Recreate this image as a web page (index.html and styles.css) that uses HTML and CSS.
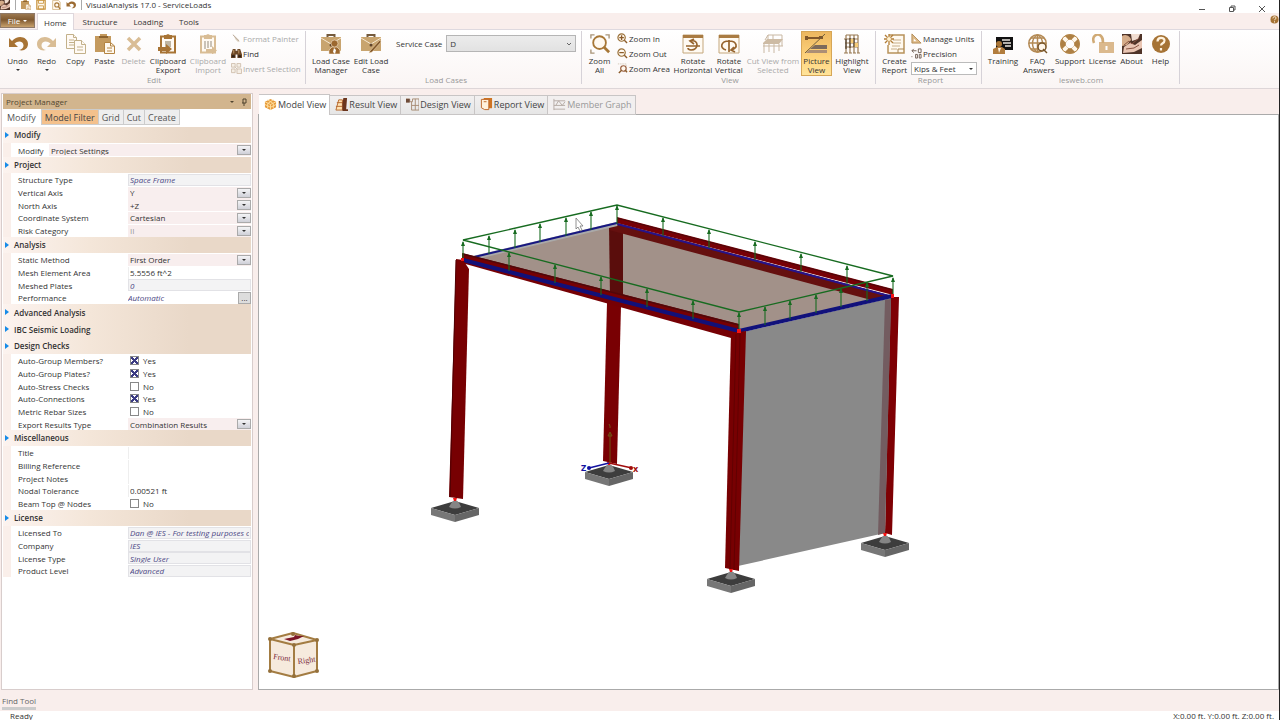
FILE: index.html
```html
<!DOCTYPE html>
<html lang="en">
<head>
<meta charset="utf-8">
<title>VisualAnalysis 17.0 - ServiceLoads</title>
<link rel="stylesheet" href="styles.css">
</head>
<body>
<svg class="defs" aria-hidden="true">
  <symbol id="undo" viewBox="0 0 20 20"><path d="M1 4v9h9L6.500 9.500C10 6 15.500 7 15.500 11.500c0 2.500-2 4-4.500 4.500 5 1.500 9-1.500 9-6C20 3 10 0 4 7z" fill="currentColor"/></symbol>
  <symbol id="redo" viewBox="0 0 20 20"><path d="M19 4v9h-9l3.500-3.500C10 6 4.500 7 4.500 11.500c0 2.500 2 4 4.500 4.500-5 1.500-9-1.500-9-6C0 3 10 0 16 7z" fill="currentColor"/></symbol>
  <symbol id="copy" viewBox="0 0 20 20"><g fill="#fffaf5" stroke="currentColor"><path d="M.5.5h7l3 3v11H.5z"/><path d="M7.500.500v3h3M3 6h5M3 8.500h5M3 11h5"/><path d="M8.500 6.500h7l4 4v9h-11z"/><path d="M15.500 6.500v4h4M11 13h6M11 16h6"/></g></symbol>
  <symbol id="paste" viewBox="0 0 20 20"><path d="M0 2h5V0h7v2h4v16H0z" fill="#c49a5e"/><path d="M4 4h9V2H4z" fill="#8d6430"/><path d="M9.500 8.500h6l4 3.500v7.500h-10z" fill="#fff8ee" stroke="#b48442"/><path d="M15.500 8.500V12h4M12 14h5M12 17h5" fill="none" stroke="#b48442"/></symbol>
  <symbol id="delete" viewBox="0 0 20 20"><path d="M4 4l12 12M16 4L4 16" stroke="currentColor" stroke-width="3.500"/></symbol>
  <symbol id="clipout" viewBox="0 0 20 20"><path d="M3 2.500h14v16H3z" fill="#fffaf3" stroke="currentColor" stroke-width="2"/><path d="M6 1h2l2-1 2 1h2v4H6z" fill="currentColor"/><path d="M7 7h6v6H7z" fill="#bfb5a2"/><path d="M0 13h8v-3l6 5-6 5v-3H0z" fill="currentColor"/></symbol>
  <symbol id="clipin" viewBox="0 0 20 20"><path d="M3 2.500h14v16H3z" fill="#fffaf3" stroke="currentColor" stroke-width="2"/><path d="M6 1h2l2-1 2 1h2v4H6z" fill="currentColor"/><path d="M7 7v8M10 7v7M13 7v6" stroke="#b9b1a5" stroke-width="1.500"/><path d="M8 15h6v-3l5 4.500-5 4V18H8z" fill="currentColor"/></symbol>
  <symbol id="brush" viewBox="0 0 12 12"><path d="M2 1l7 7-1 2-3-3z" fill="#d8cbb8"/><path d="M2 2l7 7" stroke="#bcaea0"/></symbol>
  <symbol id="find" viewBox="0 0 12 12"><path d="M2 1h3v2h2V1h3l2 6v4H7V7H5v4H0V7z" fill="#6b4726"/><path d="M1 8h3v2H1zM8 8h3v2H8z" fill="#2d2019"/><path d="M3 2v4M8.500 2v4" stroke="#c6a06d"/></symbol>
  <symbol id="invert" viewBox="0 0 12 12"><g fill="#f5eee5" stroke="#d0c0ae"><path d="M.5.500h4v4h-4zM6.500.500h4v4h-4zM.5 6.500h4v4h-4zM6.500 6.500h5v5h-5z"/><path d="M4 4l3 3"/></g></symbol>
  <symbol id="case" viewBox="0 0 20 20"><path d="M6.500 3V1h7v2" fill="none" stroke="#755b3d" stroke-width="2"/><path d="M0 3h20v14H0z" fill="#c8a46f"/><path d="M0 4l10 6 10-6" fill="none" stroke="#f5e7cf"/><circle cx="10" cy="11" r="1.500" fill="#60442a"/></symbol>
  <symbol id="manager" viewBox="0 0 20 20"><use href="#case"/><g fill="#9c682f" stroke="#f6e6d0" stroke-width=".6"><path d="M8 20v-4l3-3h5l3 3v4z"/><circle cx="13.500" cy="9.500" r="3.500"/></g><path d="M13 14l2 2-1 4-2-2z" fill="#fff"/></symbol>
  <symbol id="editcase" viewBox="0 0 20 20"><use href="#case"/><path d="M9 17L19 6l1 2-9 10-3 1z" fill="#805527" stroke="#f4dfbd" stroke-width=".5"/></symbol>
  <symbol id="zoomall" viewBox="0 0 22 22"><path d="M1 5V1h4M17 1h4v4M5 21H1v-4" fill="none" stroke="#a99578" stroke-width="1.500"/><circle cx="10.500" cy="9.500" r="7" fill="#fff9f0" stroke="#a77736" stroke-width="2"/><path d="M15 14l6 6" stroke="#a77736" stroke-width="3"/></symbol>
  <symbol id="zoomin" viewBox="0 0 12 12"><circle cx="5" cy="5" r="4" fill="#fff8ee" stroke="#9a7038" stroke-width="1.300"/><path d="M5 2.500v5M2.500 5h5M8 8l3 3" stroke="#8c5c2a" stroke-width="1.500"/></symbol>
  <symbol id="zoomout" viewBox="0 0 12 12"><circle cx="5" cy="5" r="4" fill="#fff8ee" stroke="#9a7038" stroke-width="1.300"/><path d="M2.500 5h5M8 8l3 3" stroke="#8c5c2a" stroke-width="1.500"/></symbol>
  <symbol id="zoomarea" viewBox="0 0 12 12"><path d="M1 1h9v9" fill="none" stroke="#c9bba7" stroke-dasharray="1 1"/><circle cx="7" cy="6" r="3" fill="#fff8ee" stroke="#9a5f40" stroke-width="1.300"/><path d="M5 8l-3 3M9 8l2 2" stroke="#8c5c2a" stroke-width="1.500"/></symbol>
  <symbol id="preview" viewBox="0 0 12 12"><path d="M2 .500h7l2 2v9H2z" fill="#fff8ee" stroke="#d3b583"/><circle cx="7" cy="6" r="2.500" fill="none" stroke="#a77736" stroke-width="1.300"/><path d="M9 8l2 3" stroke="#a77736" stroke-width="1.500"/></symbol>
  <symbol id="roth" viewBox="0 0 22 20"><path d="M1 1h20v18H1z" fill="#fffaf2" stroke="#c4a77d"/><path d="M1 1h20v3H1z" fill="#a97b42"/><path d="M4 12h14M9 7c8-2 8 9 0 9-2 0-3-1-3-2M12 5L8 7l4 3" fill="none" stroke="#97652f" stroke-width="1.700"/></symbol>
  <symbol id="rotv" viewBox="0 0 22 20"><path d="M1 1h20v18H1z" fill="#fffaf2" stroke="#c4a77d"/><path d="M1 1h20v3H1z" fill="#a97b42"/><path d="M11 6v12M8 16c-7-2-5-9 3-9s10 7 2 9M16 13l-3 3 4 2" fill="none" stroke="#97652f" stroke-width="1.700"/></symbol>
  <symbol id="cutview" viewBox="0 0 22 20"><path d="M1 9l4-4h16l-4 5H1z" fill="#cdbba4"/><path d="M2 9v10M7 10v8M12 10v9M17 10v7M6 5V1h14v11M1 12h20M11 1v5M6 1l-3 5" fill="none" stroke="#c9b8a3"/></symbol>
  <symbol id="picture" viewBox="0 0 22 20"><path d="M1 4h16" stroke="#80572b" stroke-width="2"/><path d="M0 2h3v4H0zM14 2h4v3h-4z" fill="#80572b"/><path d="M0 19L20 0" stroke="#6f5d3c"/><path d="M10 11h12v4H5z" fill="#7c6a5b"/><path d="M4 16h18v3H1z" fill="#ac8e75"/></symbol>
  <symbol id="highlight" viewBox="0 0 20 20"><path d="M4 1v18M8 1v18M12 1v18M16 1v18M4 1h12M2 5h14M3 9h13M3 13h13M2 19h4M7 19h3M11 19h3M15 19h3" fill="none" stroke="#987951" stroke-width="1.200"/><path d="M8 5h4v4H8zM12 9h4v4h-4z" fill="#f5cb78"/><path d="M8 4v10M12 4v9M4 5v10" stroke="#362d24"/></symbol>
  <symbol id="report" viewBox="0 0 22 20"><path d="M5 1h15v18H4v-8" fill="#fff9ef" stroke="#b8925b" stroke-width="1.500"/><path d="M9 6h8M9 9h8M8 12h8M7 15h6" stroke="#c7ae89"/><path d="M5 0v11M0 5h10M1 1l8 8M9 1L1 9" stroke="#b27d37" stroke-width="1.300"/><circle cx="5" cy="5" r="2" fill="#fff2d0"/><path d="M14 19v-4h6" fill="none" stroke="#a98755"/></symbol>
  <symbol id="units" viewBox="0 0 12 12"><path d="M1 1l10 10H1z" fill="#ddb986" stroke="#b18b57"/><path d="M3 6l3 3H3z" fill="#fff"/></symbol>
  <symbol id="precision" viewBox="0 0 12 12"><path d="M6 3H1l2-2M1 3l2 2M1 9v1M5 7h2v4H5zM9 7h2v4H9zM8 1h3v4H8z" fill="none" stroke="#6b5b50"/></symbol>
  <symbol id="training" viewBox="0 0 20 20"><path d="M3 3h17v13H3z" fill="#111"/><path d="M9 6h8M10 9h8M12 12h6" stroke="#e9e5de" stroke-width="1.500"/><circle cx="6" cy="10" r="3" fill="#a97537"/><path d="M0 20v-5l4-2h5l3 2v5z" fill="#b27d3e"/><path d="M5 14h3l-2 5z" fill="#fff4df"/></symbol>
  <symbol id="faq" viewBox="0 0 20 20"><g fill="none" stroke="#b38953" stroke-width="1.500"><circle cx="9.500" cy="9.500" r="8.700"/><path d="M1 9h17M3 4h13M3 15h13M9.500 1v17M9 1C3 5 3 14 9 18M10 1c6 4 6 13 0 17"/></g><circle cx="14" cy="13" r="4" fill="#fff6e9" stroke="#765225" stroke-width="1.500"/><path d="M15 15l4 4" stroke="#765225" stroke-width="1.500"/></symbol>
  <symbol id="support" viewBox="0 0 20 20"><circle cx="10" cy="10" r="7" fill="none" stroke="#ae8044" stroke-width="5.500"/><path d="M3 3l4 4M17 3l-4 4M3 17l4-4M17 17l-4-4" stroke="#fff7ea" stroke-width="4"/><circle cx="10" cy="10" r="9.500" fill="none" stroke="#b5874a"/></symbol>
  <symbol id="lock" viewBox="0 0 22 20"><path d="M7 19h15V8H7z" fill="#dbb98d"/><path d="M2 9C-1 1 6-1 9 2c2 2 2 3 2 7" fill="none" stroke="#d0aa75" stroke-width="2.500"/><path d="M14.500 12v4" stroke="#fff" stroke-width="2"/></symbol>
  <symbol id="about" viewBox="0 0 20 20"><path d="M0 0h20v20H0z" fill="#4e3328"/><path d="M0 2c4-3 9 1 9 4l-4 5-5 1z" fill="#d5ac89"/><path d="M9 0h9l-2 5-6 2z" fill="#f1ddd0"/><path d="M2 13l6-4 5 2 7-5v8l-8 4-11 1z" fill="#e9c5b3"/><path d="M2 11l5-4 3 3 7-6M4 15l8-1 5-3" fill="none" stroke="#8a5544"/></symbol>
  <symbol id="help" viewBox="0 0 20 20"><circle cx="10" cy="10" r="9" fill="#a67335"/><path d="M6.500 7.500c0-5 7-4.500 7-1 0 3-3.500 2.500-3.500 5M10 14v2.500" fill="none" stroke="#fff2dd" stroke-width="2.200"/></symbol>
  <symbol id="cube" viewBox="0 0 14 14"><path d="M1 4l6-3 6 3v6l-6 3-6-3z" fill="#e69b3c"/><path d="M1 4l6 3 6-3M7 7v6M4 2l6 4v5M10 2L4 6v5M1 7l6 3 6-3" fill="none" stroke="#ffe0a0"/></symbol>
  <symbol id="result" viewBox="0 0 14 14"><path d="M1 13L4 2h4v11zM2 5h7M1 9h7" fill="#ffe2b2" stroke="#b5672c"/><path d="M9 0h4l-1 12h2v2H8V6z" fill="#6b351c"/></symbol>
  <symbol id="design" viewBox="0 0 14 14"><path d="M0 1h4v3h3V1h7v12H6V4M6 8h8M10 1v12" fill="none" stroke="#a88b74"/><path d="M0 1h4v4H0z" fill="#6e4b38"/></symbol>
  <symbol id="reportview" viewBox="0 0 12 14"><path d="M3 0h9v11H3z" fill="#ce7423"/><path d="M.500 1.500h8v11H4l-3.500-2z" fill="#fff1dc" stroke="#bd6525"/><path d="M3 4h3" stroke="#bd6525"/></symbol>
  <symbol id="graph" viewBox="0 0 14 14"><path d="M1 1v12M1 3h12M1 8h12M1 12h12M3 8l3-5 4 5 3-4" fill="none" stroke="#b4aaa3"/></symbol>
  <symbol id="save" viewBox="0 0 12 12"><path d="M1 0h10v11H1z" fill="#fff8ed" stroke="#c8943e" stroke-width="1.500"/><path d="M3 0h6v4H3zM3 7h6v4H3z" fill="none" stroke="#c8943e"/></symbol>
  <symbol id="arrow" viewBox="-3 0 6 19" overflow="visible"><path d="M0 19V1" stroke="#176b20" stroke-width="1.100"/><path d="M0 0l2 5h-4z" fill="#176b20"/></symbol>
</svg>
<div class="app">
  <header class="titlebar">
    <div class="quick"><svg><use href="#about"/></svg><span class="rule"></span><svg><use href="#paste"/></svg><svg><use href="#save"/></svg><svg><use href="#preview"/></svg><svg><use href="#undo"/></svg><span class="rule"></span></div>
    <h1>VisualAnalysis 17.0 - ServiceLoads</h1>
    <div class="window-buttons">
      <button aria-label="Minimize"><svg viewBox="0 0 8 8"><path d="M1 4.500h6"/></svg></button>
      <button aria-label="Restore"><svg viewBox="0 0 8 8"><path d="M1.500 2.500h4v4h-4zM3 2V1h4v4H6"/></svg></button>
      <button aria-label="Close"><svg viewBox="0 0 8 8"><path d="M1 1l6 6M7 1L1 7"/></svg></button>
    </div>
  </header>
  <nav class="ribbon-tabs">
    <button class="file">File<i class="caret"></i></button><button class="active">Home</button><button>Structure</button><button>Loading</button><button>Tools</button>
    <svg class="corner-help"><use href="#help"/></svg>
  </nav>
  <section class="ribbon">
    <div class="group edit">
      <div class="tools">
        <button class="tool"><svg><use href="#undo"/></svg>Undo<i class="caret"></i></button>
        <button class="tool"><svg class="pale"><use href="#redo"/></svg>Redo<i class="caret"></i></button>
        <button class="tool"><svg class="soft"><use href="#copy"/></svg>Copy</button>
        <button class="tool"><svg><use href="#paste"/></svg>Paste</button>
        <button class="tool off" disabled><svg class="pale"><use href="#delete"/></svg>Delete</button>
        <button class="tool wide"><svg><use href="#clipout"/></svg>Clipboard<br>Export</button>
        <button class="tool wide off" disabled><svg class="pale"><use href="#clipin"/></svg>Clipboard<br>Import</button>
        <div class="stack"><button class="off" disabled><svg><use href="#brush"/></svg>Format Painter</button><button><svg><use href="#find"/></svg>Find</button><button class="off" disabled><svg><use href="#invert"/></svg>Invert Selection</button></div>
      </div>
      <div class="caption">Edit</div>
    </div>
    <div class="group cases">
      <div class="tools">
        <button class="tool wide"><svg><use href="#manager"/></svg>Load Case<br>Manager</button>
        <button class="tool wide"><svg><use href="#editcase"/></svg>Edit Load<br>Case</button>
        <div class="service"><label for="service">Service Case</label><span class="picker"><select id="service"><option>D</option></select><svg viewBox="0 0 6 6"><path d="M1 2l2 2 2-2"/></svg></span></div>
      </div>
      <div class="caption">Load Cases</div>
    </div>
    <div class="group view">
      <div class="tools">
        <button class="tool"><svg><use href="#zoomall"/></svg>Zoom<br>All</button>
        <div class="stack"><button><svg><use href="#zoomin"/></svg>Zoom In</button><button><svg><use href="#zoomout"/></svg>Zoom Out</button><button><svg><use href="#zoomarea"/></svg>Zoom Area</button></div>
        <button class="tool wide"><svg><use href="#roth"/></svg>Rotate<br>Horizontal</button>
        <button class="tool"><svg><use href="#rotv"/></svg>Rotate<br>Vertical</button>
        <button class="tool widest off" disabled><svg><use href="#cutview"/></svg>Cut View from<br>Selected</button>
        <button class="tool on"><svg><use href="#picture"/></svg>Picture<br>View</button>
        <button class="tool wide"><svg><use href="#highlight"/></svg>Highlight<br>View</button>
      </div>
      <div class="caption">View</div>
    </div>
    <div class="group report">
      <div class="tools">
        <button class="tool"><svg><use href="#report"/></svg>Create<br>Report</button>
        <div class="stack"><button><svg><use href="#units"/></svg>Manage Units</button><button><svg><use href="#precision"/></svg>Precision</button><span class="picker unit"><select aria-label="Units"><option>Kips &amp; Feet</option></select><i class="caret"></i></span></div>
      </div>
      <div class="caption">Report</div>
    </div>
    <div class="group web">
      <div class="tools">
        <button class="tool wide"><svg><use href="#training"/></svg>Training</button>
        <button class="tool"><svg><use href="#faq"/></svg>FAQ<br>Answers</button>
        <button class="tool mid"><svg><use href="#support"/></svg>Support</button>
        <button class="tool"><svg><use href="#lock"/></svg>License</button>
        <button class="tool"><svg><use href="#about"/></svg>About</button>
        <button class="tool"><svg><use href="#help"/></svg>Help</button>
      </div>
      <div class="caption">iesweb.com</div>
    </div>
  </section>
  <main class="workspace">
    <aside class="manager">
      <h2>Project Manager<span><i class="caret"></i><svg viewBox="0 0 8 8"><path d="M2 5h4M3 5V1h3v4M4 5v3"/></svg></span></h2>
      <div class="side-tabs"><button class="active">Modify</button><button class="filter">Model Filter</button><button>Grid</button><button>Cut</button><button>Create</button></div>
      <div class="properties">
        <h3>Modify</h3>
        <div class="rows modify"><div class="row"><label for="mod">Modify</label><span class="picker"><select id="mod"><option>Project Settings</option></select><b><i class="caret"></i></b></span></div></div>
        <h3>Project</h3>
        <div class="rows">
          <div class="row"><label for="p1">Structure Type</label><input id="p1" class="locked" readonly value="Space Frame"></div>
          <div class="row"><label for="p2">Vertical Axis</label><span class="picker"><select id="p2"><option>Y</option></select><b><i class="caret"></i></b></span></div>
          <div class="row"><label for="p3">North Axis</label><span class="picker"><select id="p3"><option>+Z</option></select><b><i class="caret"></i></b></span></div>
          <div class="row"><label for="p4">Coordinate System</label><span class="picker"><select id="p4"><option>Cartesian</option></select><b><i class="caret"></i></b></span></div>
          <div class="row"><label for="p5">Risk Category</label><span class="picker"><select id="p5" class="dim"><option>II</option></select><b><i class="caret"></i></b></span></div>
        </div>
        <h3>Analysis</h3>
        <div class="rows">
          <div class="row"><label for="a1">Static Method</label><span class="picker"><select id="a1"><option>First Order</option></select><b><i class="caret"></i></b></span></div>
          <div class="row"><label for="a2">Mesh Element Area</label><input id="a2" value="5.5556 ft^2"></div>
          <div class="row"><label for="a3">Meshed Plates</label><input id="a3" class="locked" readonly value="0"></div>
          <div class="row"><label for="a4">Performance</label><span class="browse"><input id="a4" value="Automatic"><button aria-label="Edit performance">...</button></span></div>
        </div>
        <h3 class="closed">Advanced Analysis</h3>
        <h3 class="closed">IBC Seismic Loading</h3>
        <h3>Design Checks</h3>
        <div class="rows">
          <div class="row"><span>Auto-Group Members?</span><label><input type="checkbox" checked>Yes</label></div>
          <div class="row"><span>Auto-Group Plates?</span><label><input type="checkbox" checked>Yes</label></div>
          <div class="row"><span>Auto-Stress Checks</span><label><input type="checkbox">No</label></div>
          <div class="row"><span>Auto-Connections</span><label><input type="checkbox" checked>Yes</label></div>
          <div class="row"><span>Metric Rebar Sizes</span><label><input type="checkbox">No</label></div>
          <div class="row"><label for="d1">Export Results Type</label><span class="picker"><select id="d1"><option>Combination Results</option></select><b><i class="caret"></i></b></span></div>
        </div>
        <h3>Miscellaneous</h3>
        <div class="rows">
          <div class="row"><label for="m1">Title</label><input id="m1"></div>
          <div class="row"><label for="m2">Billing Reference</label><input id="m2"></div>
          <div class="row"><label for="m3">Project Notes</label><input id="m3"></div>
          <div class="row"><label for="m4">Nodal Tolerance</label><input id="m4" value="0.00521 ft"></div>
          <div class="row"><span>Beam Top @ Nodes</span><label><input type="checkbox">No</label></div>
        </div>
        <h3>License</h3>
        <div class="rows">
          <div class="row"><label for="l1">Licensed To</label><input id="l1" class="locked" readonly value="Dan @ IES - For testing purposes only"></div>
          <div class="row"><label for="l2">Company</label><input id="l2" class="locked" readonly value="IES"></div>
          <div class="row"><label for="l3">License Type</label><input id="l3" class="locked" readonly value="Single User"></div>
          <div class="row"><label for="l4">Product Level</label><input id="l4" class="locked" readonly value="Advanced"></div>
        </div>
      </div>
    </aside>
    <section class="document">
      <div class="view-tabs"><button class="active"><svg><use href="#cube"/></svg>Model View</button><button><svg><use href="#result"/></svg>Result View</button><button><svg><use href="#design"/></svg>Design View</button><button><svg><use href="#reportview"/></svg>Report View</button><button class="off" disabled><svg><use href="#graph"/></svg>Member Graph</button></div>
      <div class="canvas">
        <svg viewBox="259 114 1019 574" role="img" aria-label="Structural frame model">
          <defs>
            <g id="footing"><path d="M-24 7L0 0l24 7-24 7z" fill="#3d3d3d"/><path d="M-24 7L0 14v7l-24-7z" fill="#777"/><path d="M24 7L0 14v7l24-7z" fill="#666"/><path d="M-6 6Q-3 0 0-1q4 1 6 7-6 3-12 0z" fill="#858585"/><path d="M-2-3h4L1 0l-2 0z" fill="#f41414"/></g>
          </defs>
          <path d="M609 223l14 3-6 237-14-3z" fill="#790003"/>
          <path d="M890 296l9 0-7 238-7-2z" fill="#7e0004"/>
          <path d="M743 331l148-34-6 235-147 33z" fill="#898989"/>
          <path d="M885 299l6-1-6 234-7 2z" fill="#735c60"/>
          <path d="M469 259l148-37 275 73-153 35z" fill="#a29189"/>
          <path d="M609 223l14 2v75l-13-3z" fill="#5a0d0c"/>
          <path d="M617 222l275 73-17 5-266-71z" fill="#65100f"/>
          <path d="M617 216l276 72v6l-276-72z" fill="#770006"/>
          <path d="M617 217l276 72" stroke="#4c080a" stroke-width="1"/>
          <path d="M617 223l276 73" stroke="#26138a" stroke-width="2"/>
          <path d="M473 257l144-34" stroke="#aaa" stroke-width="4"/>
          <path d="M470 257l147-35" stroke="#171782" stroke-width="2"/>
          <path d="M462 252l277 71v13l-8 1-269-75z" fill="#760004"/>
          <path d="M463 253l276 71" stroke="#4e080a" stroke-width="1.500"/>
          <path d="M463 259l276 71" stroke="#121078" stroke-width="4"/>
          <path d="M739 330l153-35" stroke="#11117b" stroke-width="4"/>
          <path d="M456 258l7 1 6 9-6 230-14-2z" fill="#770002"/>
          <path d="M456 259l-6 237" stroke="#4f0003"/>
          <path d="M731 332l15-2-7 240-14-3z" fill="#770002"/>
          <path d="M736 333l-6 235M740 333l-6 236" stroke="#620002"/>
          <path d="M463 239l154-35 276 71-154 36z" fill="none" stroke="#176b20" stroke-width="1.300"/>
          <g>
            <use href="#arrow" x="460" y="240" width="6" height="19"/><use href="#arrow" x="486" y="234" width="6" height="19"/><use href="#arrow" x="512" y="228" width="6" height="19"/><use href="#arrow" x="537" y="222" width="6" height="19"/><use href="#arrow" x="563" y="216" width="6" height="19"/><use href="#arrow" x="588" y="210" width="6" height="19"/><use href="#arrow" x="614" y="204" width="6" height="19"/>
            <use href="#arrow" x="660" y="216" width="6" height="19"/><use href="#arrow" x="706" y="228" width="6" height="19"/><use href="#arrow" x="752" y="240" width="6" height="19"/><use href="#arrow" x="798" y="252" width="6" height="19"/><use href="#arrow" x="844" y="264" width="6" height="19"/><use href="#arrow" x="890" y="276" width="6" height="19"/>
            <use href="#arrow" x="762" y="305" width="6" height="19"/><use href="#arrow" x="787" y="299" width="6" height="19"/><use href="#arrow" x="813" y="293" width="6" height="19"/><use href="#arrow" x="838" y="287" width="6" height="19"/><use href="#arrow" x="864" y="281" width="6" height="19"/>
            <use href="#arrow" x="506" y="251" width="6" height="19"/><use href="#arrow" x="552" y="263" width="6" height="19"/><use href="#arrow" x="598" y="275" width="6" height="19"/><use href="#arrow" x="644" y="287" width="6" height="19"/><use href="#arrow" x="690" y="299" width="6" height="19"/><use href="#arrow" x="736" y="311" width="6" height="19"/>
          </g>
          <use href="#footing" x="455" y="500"/><use href="#footing" x="609" y="464"/><use href="#footing" x="731" y="571"/><use href="#footing" x="885" y="535"/>
          <path d="M737 328h4v4h-4zM891 293h3v4h-3zM461 257h3v3h-3z" fill="#f41414"/>
          <path d="M609 462l-20 5" stroke="#1212a0" stroke-width="1.500"/><circle cx="589" cy="467" r="2" fill="#1212a0"/>
          <path d="M609 462l23 5" stroke="#a00b0b" stroke-width="1.500"/><circle cx="631" cy="467" r="2" fill="#a00b0b"/>
          <path d="M610 462v-30M608 435l2-4 2 4zM609 423l1 2v2" fill="none" stroke="#705414"/>
          <text x="581" y="470" class="axis z">Z</text><text x="633" y="471" class="axis x">x</text>
          <path d="M576 217v11l2-2 2 4 2-1-2-4h3z" fill="#fff" stroke="#777" stroke-width=".8"/>
          <g stroke="#a37c42" stroke-width="2" stroke-linejoin="round"><path d="M270 638l23-6 24 7-23 5zM270 638l24 6v32l-24-6zM294 644l23-5v31l-23 6z" fill="#f6eadd"/></g>
          <g fill="#94703a"><circle cx="270" cy="638" r="2"/><circle cx="294" cy="644" r="2"/><circle cx="317" cy="639" r="2"/><circle cx="293" cy="633" r="2"/><circle cx="270" cy="670" r="2"/><circle cx="294" cy="675" r="2"/><circle cx="317" cy="670" r="2"/></g>
          <path d="M284 638l10-2 1-2 4 1 5 0-6 3-8 2z" fill="#7c1527"/>
          <text x="273" y="658" class="face" transform="rotate(8 273 658)">Front</text><text x="298" y="663" class="face" transform="rotate(-8 298 663)">Right</text>
        </svg>
      </div>
    </section>
  </main>
  <div class="toolstrip"><button>Find Tool</button></div>
  <footer class="status"><span>Ready</span><span>X:0.00 ft. Y:0.00 ft. Z:0.00 ft.</span></footer>
</div>
</body>
</html>
```

FILE: styles.css
```css
* { box-sizing: border-box; }
body { margin: 0; font: 8px/9px "Open Sans", "Noto Sans", sans-serif; color: #333; background: #f9eeec; overflow: hidden; }
button, input, select { font: inherit; color: inherit; margin: 0; padding: 0; border: 0; background: none; border-radius: 0; }
select { appearance: none; }
h1, h2, h3 { margin: 0; font: inherit; }
.defs { position: absolute; width: 0; height: 0; }
.app { height: 100vh; display: flex; flex-direction: column; border-right: 1px solid #222; }
.caret { display: inline-block; width: 0; border: 2px solid transparent; border-top-color: currentColor; border-bottom: 0; }

.titlebar { flex: none; height: 13px; display: flex; background: #fff; align-items: flex-start; }
.titlebar h1 { line-height: 10px; }
.quick { display: flex; gap: 5px; width: 86px; height: 10px; overflow: hidden; color: #9b6a31; }
.quick svg { width: 10px; height: 10px; flex: none; }
.quick .rule { width: 1px; background: #aaa; }
.window-buttons { margin-left: auto; display: flex; gap: 22px; padding: 5px 13px 0 0; }
.window-buttons svg { display: block; width: 8px; height: 8px; fill: none; stroke: #555; }

.ribbon-tabs { flex: none; height: 17px; display: flex; border-bottom: 1px solid #ded9df; }
.ribbon-tabs button { padding: 0 8px; }
.ribbon-tabs .active { background: #fff; border: 1px solid #ded7dc; border-bottom: 0; padding: 0 6px; margin: 0 1px -1px 2px; }
.ribbon-tabs .file { width: 35px; padding: 0; background: linear-gradient(#9b784f, #7f5930 45%, #c8a16c); color: #fff; border: 1px solid #8e7968; height: 15px; }
.ribbon-tabs .caret { margin: 0 0 2px 3px; }
.corner-help { width: 9px; height: 9px; margin: 2px 0 0 auto; }

.ribbon { flex: none; height: 59px; display: flex; background: linear-gradient(#fff, #faf5f4); border-bottom: 1px solid #ddd6d8; }
.group { margin: 1px 0 4px; border-right: 1px solid #d6d2d8; display: flex; flex-direction: column; justify-content: space-between; }
.edit { width: 306px; padding-left: 3px; }
.cases { width: 276px; padding-left: 5px; }
.view { width: 294px; padding-left: 3px; }
.report { width: 106px; padding-left: 4px; }
.web { width: 198px; padding-left: 1px; }
.tools { display: flex; align-items: flex-start; }
.caption { text-align: center; color: #999; line-height: 8px; }
.tool { flex: none; width: 29px; white-space: nowrap; text-align: center; padding-top: 3px; }
.tool.mid { width: 36px; }
.tool.wide { width: 40px; }
.tool.widest { width: 56px; }
.tool svg { display: block; width: 22px; height: 20px; margin: 0 auto 2px; color: #a87435; }
.tool .caret { display: block; width: 4px; margin: 4px auto 0; }
.tool svg.pale { color: #d9bd95; }
.tool svg.soft { color: #c3b18a; }
.tool.on { width: 31px; background: linear-gradient(#ecb75f, #ffd47e 60%, #ffe399); border: 1px solid #d6a657; padding: 2px 0 1px; }
.off, .tool.off { color: #aaa; }
.view .tool:nth-child(4) { width: 32px; }
.stack { display: flex; flex-direction: column; margin: 0 3px; }
.stack button { display: flex; align-items: center; height: 15px; white-space: nowrap; }
.stack svg { width: 11px; height: 11px; margin-right: 1px; }
.service { display: flex; align-items: center; gap: 4px; margin: 4px 5px; white-space: nowrap; flex: 1; }
.picker { position: relative; display: block; }
.picker select { width: 100%; height: 100%; display: block; padding-left: 2px; }
.picker > svg, .picker > .caret { position: absolute; right: 3px; top: 50%; width: 6px; height: 6px; margin-top: -3px; fill: none; stroke: #666; }
.picker > .caret { width: 0; height: 0; margin-top: -1px; }
.service .picker { flex: 1; height: 17px; background: linear-gradient(#ececec, #e2e2e2); border: 1px solid #b5b5b5; }
.service select { padding-left: 3px; }
.unit { width: 66px; height: 13px; margin-top: 1px; border: 1px solid #bbb; background: #fff; }
.report .stack { margin: 0 2px; }

.workspace { flex: 1; min-height: 0; display: flex; gap: 5px; padding: 4px 0 0 1px; }
.manager { flex: none; width: 252px; background: #fff; border: 1px solid #d8cdcc; display: flex; flex-direction: column; }
.manager h2 { background: #d2b58e; height: 15px; margin: 0 1px; padding: 0 3px; display: flex; justify-content: space-between; align-items: center; color: #51452f; }
.manager h2 span { display: flex; align-items: center; gap: 6px; }
.manager h2 svg { width: 8px; height: 8px; fill: none; stroke: #51452f; }
.side-tabs { display: flex; height: 16px; font-size: 9px; color: #555; }
.side-tabs button { background: #eee; border: 1px solid #ccc; border-left: 0; padding: 0 3px; }
.side-tabs .active { background: #fff; border-top: 0; border-bottom: 0; padding: 0 5px; }
.side-tabs .filter { background: #f4c18c; color: #444; }
.properties { margin: 2px 1px 0; }
.properties h3 { height: 16px; line-height: 16px; padding-left: 11px; font-weight: 600; background: linear-gradient(90deg, #fcf3ef, #f4e6d9 35%, #e9d8c8 75%); position: relative; }
.properties h3.closed { height: 17px; line-height: 17px; }
.properties h3::before { content: ""; position: absolute; left: 2px; top: 5px; border: 3px solid transparent; border-left: 4px solid #168be8; border-right: 0; }
.rows { border-left: 8px solid #faefea; }
.row { height: 13px; display: grid; grid-template-columns: 117px 1fr; align-items: center; }
.row:nth-child(3n) { height: 12px; }
.row > :first-child { padding-left: 7px; }
.modify .row { height: 14px; grid-template-columns: 38px 1fr; }
.row .picker { height: 12px; background: #f8eeee; }
.row .picker b { position: absolute; right: 0; top: 1px; width: 14px; height: 10px; display: grid; place-items: center; background: linear-gradient(#f4f4f6, #cfd0d8); border: 1px solid #aaa; pointer-events: none; }
.row > input { width: 100%; height: 12px; padding: 0 1px; border-left: 1px solid #eee; }
.row > input.locked { background: #f3f3f4; border: 1px solid #e2e2e6; color: #4b4884; font-style: italic; }
.row .dim { color: #999; }
.browse { display: flex; min-width: 0; }
.browse input { flex: 1; min-width: 0; font-style: italic; color: #4b4884; }
.browse button { width: 13px; height: 12px; line-height: 8px; background: #ddd; border: 1px solid #aaa; }
.row > label:last-child { display: flex; align-items: center; gap: 4px; padding-left: 2px; }
.row input[type=checkbox] { appearance: none; width: 9px; height: 9px; border: 1px solid #888; background: #fff; }
.row input:checked { background: linear-gradient(45deg, transparent 42%, #3b3b83 42% 58%, transparent 58%), linear-gradient(-45deg, transparent 42%, #3b3b83 42% 58%, transparent 58%), #fff; }

.document { flex: 1; min-width: 0; display: flex; flex-direction: column; }
.view-tabs { flex: none; height: 22px; display: flex; align-items: flex-end; font-size: 9px; padding-left: 1px; margin-bottom: -1px; z-index: 1; }
.view-tabs button { height: 20px; display: flex; align-items: center; gap: 1px; padding: 0 3px 2px 5px; background: linear-gradient(#f2f0f0, #e6e6e6); border: 1px solid #c8c5c5; border-left: 0; white-space: nowrap; color: #444; }
.view-tabs .active { height: 21px; background: #fff; border-bottom: 0; }
.view-tabs .off { color: #999; background: #f2efef; }
.view-tabs svg { width: 13px; height: 13px; }
.canvas { flex: 1; min-height: 0; background: #fff; border: 1px solid #aaa; }
.canvas svg { display: block; width: 100%; height: 100%; }
.axis { font-weight: 700; font-size: 9px; }
.z { fill: #1212a0; }
.x { fill: #a00b0b; }
.face { font: 8px "Liberation Serif", serif; fill: #7b293a; }
.toolstrip { flex: none; height: 21px; padding: 3px 2px 0; }
.toolstrip button { height: 17px; border-bottom: 3px solid #ccc; color: #666; }
.status { flex: none; height: 9px; display: flex; justify-content: space-between; background: #fff; padding: 0 5px 0 10px; line-height: 9px; }
```
